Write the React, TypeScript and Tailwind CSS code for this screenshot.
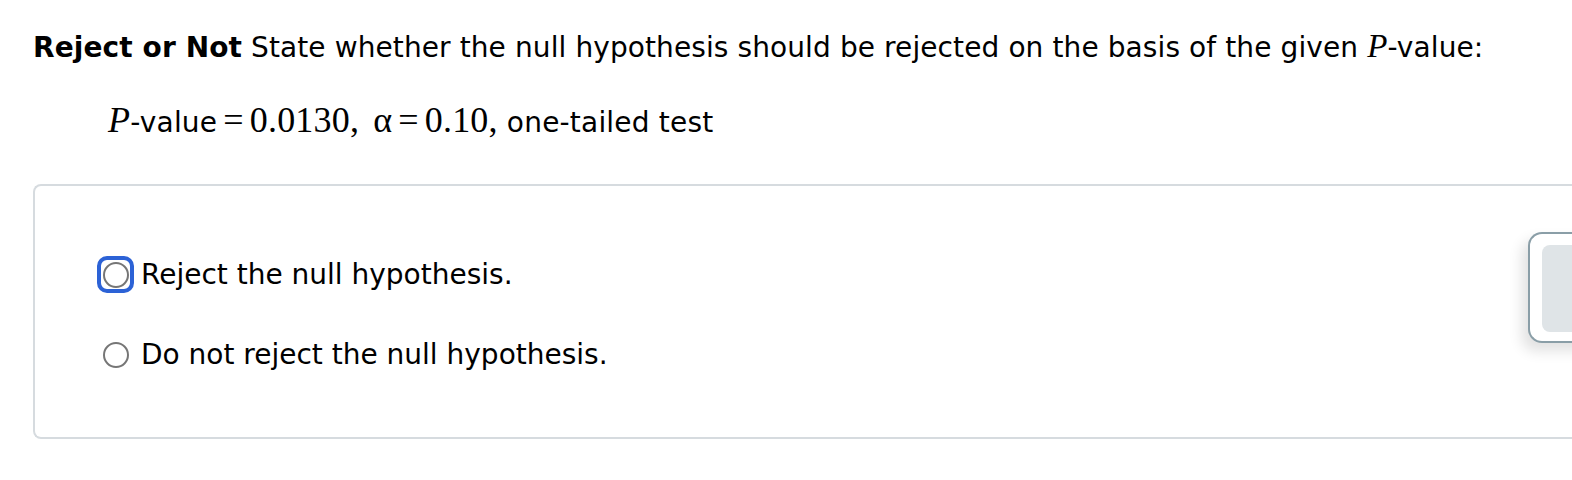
import React from "react";

const sans = { fontFamily: '"DejaVu Sans", Verdana, sans-serif' };
const serif = { fontFamily: '"Liberation Serif", "Times New Roman", serif' };

export default function App() {
  return (
    <div className="w-[1572px] h-[480px] bg-white overflow-hidden text-black" style={sans}>
      <div className="pl-[33px] pt-[30px]">
        <p className="text-[28px] leading-[36px] whitespace-nowrap tracking-[0.1px]">
          <span className="font-bold">Reject or Not</span> State whether the null hypothesis should be rejected on the basis of the given{" "}
          <span className="italic text-[33px] leading-[20px]" style={serif}>P</span>-value:
        </p>
        <p className="mt-[39px] pl-[75px] text-[28px] leading-[36px] whitespace-nowrap tracking-[0.2px]">
          <span className="italic text-[36px] leading-[20px]" style={serif}>P</span>
          -value
          <span className="text-[36px] leading-[20px] mx-[6px]" style={serif}>=</span>
          <span className="text-[36px] leading-[20px]" style={serif}>0.0130,</span>
          <span className="inline-block w-[14px]" />
          <span className="text-[36px] leading-[20px]" style={serif}>α</span>
          <span className="text-[36px] leading-[20px] mx-[6px]" style={serif}>=</span>
          <span className="text-[36px] leading-[20px]" style={serif}>0.10,</span> one-tailed test
        </p>
        <div className="mt-[43px] relative h-[255px] border-2 border-r-0 border-[#d6dbdf] rounded-l-[8px]">
          <div className="pt-[70px] pl-[62px] flex flex-col gap-[43px]">
            <div className="flex items-center gap-[7px]">
              <div className="w-[37px] h-[37px] rounded-[10px] border-[4px] border-[#2c62d6] flex items-center justify-center">
                <div className="w-[26px] h-[26px] rounded-full border-2 border-[#767676] bg-white" />
              </div>
              <span className="text-[28px] leading-[36px]">Reject the null hypothesis.</span>
            </div>
            <div className="flex items-center gap-[7px]">
              <div className="w-[37px] h-[37px] flex items-center justify-center">
                <div className="w-[26px] h-[26px] rounded-full border-2 border-[#767676] bg-white" />
              </div>
              <span className="text-[28px] leading-[36px]">Do not reject the null hypothesis.</span>
            </div>
          </div>
          <div className="absolute left-[1493px] top-[46px] w-[80px] h-[111px] border-2 border-r-0 border-[#8a9ea7] rounded-l-[14px] bg-white shadow-[-6px_8px_14px_rgba(0,0,0,0.12)] pl-[12px] pt-[11px] pb-[9px]">
            <div className="w-full h-full bg-[#dfe4e7] rounded-l-[8px]" />
          </div>
        </div>
      </div>
    </div>
  );
}
